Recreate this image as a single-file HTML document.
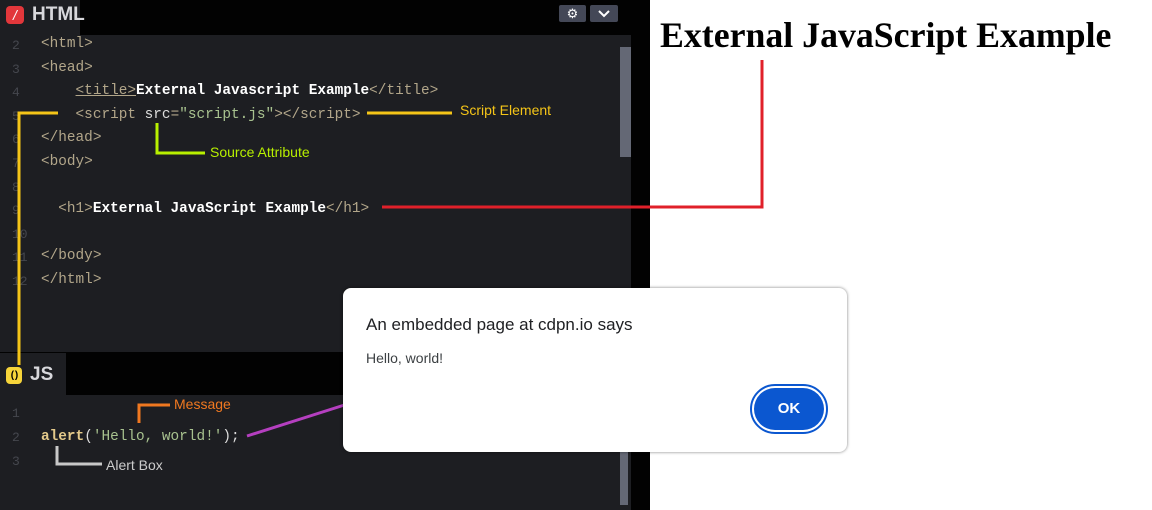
<!DOCTYPE html>
<html><head><style>
body{margin:0;width:1152px;height:510px;position:relative;overflow:hidden;background:#fff;font-family:"Liberation Sans",sans-serif}
.a{position:absolute}
.code{font-family:"Liberation Mono",monospace;font-size:14.4px;color:#b2a68a;white-space:pre}
.ln{font-family:"Liberation Mono",monospace;font-size:13px;color:#45474e}
.w{color:#fff;font-weight:bold}
.g{color:#a8c28f}
</style></head><body>
<div class="a" style="left:0;top:0;width:650px;height:510px;background:#020202"></div>
<div class="a" style="left:0;top:35px;width:631px;height:317px;background:#1d1e22"></div>
<div class="a" style="left:0;top:0;width:80px;height:36px;background:#1d1e22"></div>
<div class="a" style="left:6px;top:6px;width:18px;height:18px;background:#e2373b;border-radius:4px;color:#fff;font-size:14px;text-align:center;line-height:18px;font-style:italic">/</div>
<div class="a" style="left:32px;top:4px;color:#d8d8dc;font-size:19px;font-weight:bold">HTML</div>
<div class="a" style="left:559px;top:5px;width:27px;height:17px;background:#444857;border-radius:2px;color:#fff;font-size:13px;text-align:center;line-height:17px">⚙</div>
<div class="a" style="left:590px;top:5px;width:28px;height:17px;background:#444857;border-radius:2px"><svg width="28" height="17"><path d="M9 6l5 5 5-5" stroke="#fff" stroke-width="2" fill="none"/></svg></div>
<div class="a" style="left:620px;top:47px;width:11px;height:110px;background:#646875"></div>
<div class="a ln" style="left:12px;top:34px;line-height:23.6px">2<br>3<br>4<br>5<br>6<br>7<br>8<br>9<br>10<br>11<br>12</div>
<div class="a code" style="left:41px;top:33px;line-height:23.6px">&lt;html&gt;
&lt;head&gt;
    <span style="text-decoration:underline">&lt;title&gt;</span><span class="w">External Javascript Example</span>&lt;/title&gt;
    &lt;script <span style="color:#ddd">src</span>=<span class="g">"script.js"</span>&gt;&lt;/script&gt;
&lt;/head&gt;
&lt;body&gt;

  &lt;h1&gt;<span class="w">External JavaScript Example</span>&lt;/h1&gt;

&lt;/body&gt;
&lt;/html&gt;</div>
<div class="a" style="left:0;top:353px;width:631px;height:157px;background:#020202"></div>
<div class="a" style="left:0;top:353px;width:66px;height:42px;background:#1d1e22"></div>
<div class="a" style="left:0;top:395px;width:631px;height:115px;background:#1d1e22"></div>
<div class="a" style="left:620px;top:450px;width:8px;height:55px;background:#646875"></div>
<div class="a" style="left:6px;top:367px;width:16px;height:17px;background:#f6d43a;border-radius:4px;font-size:10px;text-align:center;line-height:17px;font-weight:bold;letter-spacing:-1px">( )</div>
<div class="a" style="left:30px;top:364px;color:#d8d8dc;font-size:19px;font-weight:bold">JS</div>
<div class="a ln" style="left:12px;top:402px;line-height:24px">1<br>2<br>3</div>
<div class="a code" style="left:41px;top:425px;line-height:24px"><span style="color:#e3c98a;font-weight:bold">alert</span><span style="color:#ddd">(</span><span class="g">'Hello, world!'</span><span style="color:#ddd">);</span></div>
<div class="a" style="left:660px;top:14px;font-family:'Liberation Serif',serif;font-weight:bold;font-size:35.8px;color:#000">External JavaScript Example</div>
<svg class="a" style="left:0;top:0" width="1152" height="510">
<path d="M58 113H19V365" stroke="#f5c518" stroke-width="3" fill="none"/>
<path d="M367 113H452" stroke="#f5c518" stroke-width="3"/>
<path d="M157 123V153H205" stroke="#b8f000" stroke-width="3" fill="none"/>
<path d="M382 207H762V60" stroke="#e0202a" stroke-width="3" fill="none"/>
<path d="M247 436L357 401" stroke="#b53fc0" stroke-width="3"/>
<path d="M139 423V405H170" stroke="#f07820" stroke-width="3" fill="none"/>
<path d="M57 446V464H102" stroke="#c8c8c8" stroke-width="3" fill="none"/>
</svg>
<div class="a" style="left:460px;top:102px;color:#f5c518;font-size:14px">Script Element</div>
<div class="a" style="left:210px;top:144px;color:#b8f000;font-size:14px">Source Attribute</div>
<div class="a" style="left:174px;top:396px;color:#f07820;font-size:14px">Message</div>
<div class="a" style="left:106px;top:457px;color:#ccc;font-size:14px">Alert Box</div>
<div class="a" style="left:343px;top:288px;width:504px;height:164px;background:#fff;border-radius:8px;box-shadow:0 0 3px rgba(0,0,0,.5)"></div>
<div class="a" style="left:366px;top:315px;font-size:17px;color:#202124">An embedded page at cdpn.io says</div>
<div class="a" style="left:366px;top:350px;font-size:14px;color:#3c4043">Hello, world!</div>
<div class="a" style="left:750px;top:384px;width:74px;height:46px;border:2px solid #0b57d0;border-radius:25px;"></div>
<div class="a" style="left:754px;top:388px;width:70px;height:42px;background:#0b57d0;border-radius:22px;color:#fff;font-weight:bold;font-size:15px;text-align:center;line-height:42px">OK</div>
</body></html>
